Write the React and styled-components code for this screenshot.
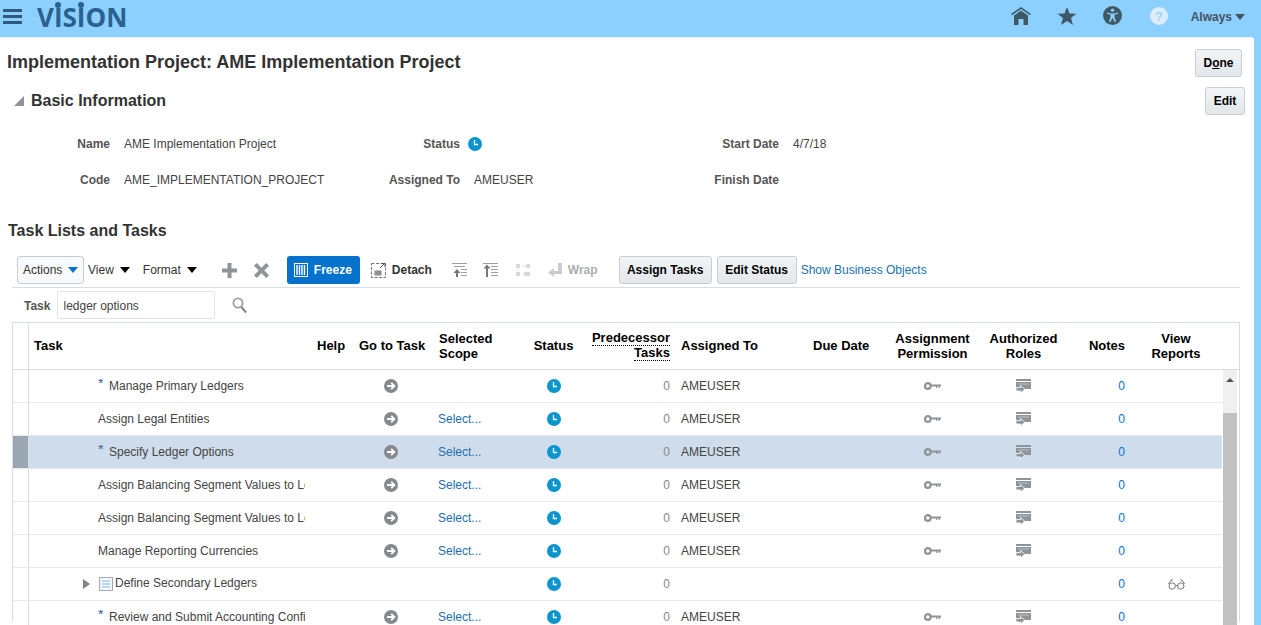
import React from 'react'
import styled, { createGlobalStyle } from 'styled-components'

const COLUMNS = '281px 41px 81px 91px 61px 91px 132px 80px 91px 91px 61px 92px'

const rows = [
  { name: 'Manage Primary Ledgers', required: true, scope: false },
  { name: 'Assign Legal Entities', scope: true },
  { name: 'Specify Ledger Options', required: true, scope: true, selected: true },
  { name: 'Assign Balancing Segment Values to Ledgers', scope: true },
  { name: 'Assign Balancing Segment Values to Ledgers', scope: true },
  { name: 'Manage Reporting Currencies', scope: true },
  { name: 'Define Secondary Ledgers', folder: true },
  { name: 'Review and Submit Accounting Configuration', required: true, scope: true },
]

const GlobalStyle = createGlobalStyle`
  html, body {
    margin: 0;
    padding: 0;
    height: 625px;
    overflow: hidden;
    background: #8cd0ff;
    font-family: "Liberation Sans", Arial, sans-serif;
    font-size: 12px;
    color: #333;
  }
`

const Page = styled.div`
  width: 1261px;
  height: 625px;
  overflow: hidden;
  background: #8cd0ff;
`

const Header = styled.header`
  height: 37px;
  display: flex;
  align-items: center;
  padding: 0 16px 0 3px;
  box-sizing: border-box;
`

const MenuIcon = styled.div`
  width: 19px;
  height: 15px;
  border-top: 3px solid #2f5a7c;
  border-bottom: 3px solid #2f5a7c;
  box-sizing: border-box;
  position: relative;
  top: -2px;
  &::after {
    content: '';
    display: block;
    height: 3px;
    margin-top: 3px;
    background: #2f5a7c;
  }
`

const Logo = styled.div`
  margin-left: 15px;
  font-family: "Open Sans", sans-serif;
  font-weight: 700;
  font-size: 26px;
  line-height: 27px;
  color: #2a6190;
  position: relative;
  top: -1px;
  white-space: nowrap;
`

const LogoDot = styled.span`
  position: relative;
  &::before {
    content: '';
    position: absolute;
    left: 50%;
    top: 3px;
    width: 6px;
    height: 6px;
    margin-left: -3px;
    border-radius: 50%;
    background: #2a6190;
  }
`

const HeaderRight = styled.div`
  margin-left: auto;
  display: flex;
  align-items: center;
  color: #3f5866;
  position: relative;
  top: -2px;
`

const HeaderIcon = styled.span`
  display: flex;
  width: 46px;
  justify-content: center;
  margin-top: -2px;
`

const UserName = styled.span`
  font-size: 12px;
  font-weight: 700;
  color: #44535f;
  display: flex;
  align-items: center;
  gap: 3px;
  margin-left: 9px;
`

const Caret = styled.span`
  width: 0;
  height: 0;
  border-left: 5px solid transparent;
  border-right: 5px solid transparent;
  border-top: 6px solid ${(p) => p.$color || '#000'};
`

const Panel = styled.main`
  width: 1254px;
  height: 588px;
  background: #fff;
  border-top: 1px solid #e8f5ff;
  border-top-right-radius: 3px;
  box-sizing: border-box;
  overflow: hidden;
`

const TitleRow = styled.div`
  display: flex;
  align-items: center;
  justify-content: space-between;
  padding: 11px 12px 0 7px;
`

const Title = styled.h1`
  margin: 0 0 2px;
  font-size: 18px;
  font-weight: 700;
  color: #333;
`

const Button = styled.button`
  height: 28px;
  padding: 0;
  background: linear-gradient(#f2f4f6, #e3e7ea);
  border: 1px solid #c4ced7;
  border-radius: 3px;
  font-family: inherit;
  font-size: 12px;
  font-weight: 700;
  color: #000;
  box-sizing: border-box;
  width: ${(p) => p.$w}px;
  flex: none;
`

const EditButton = styled(Button)`
  margin-left: auto;
`

const BasicRow = styled.div`
  display: flex;
  align-items: center;
  padding: 10px 9px 0 14px;
`

const SectionTitle = styled.h2`
  margin: 0;
  font-size: 16px;
  font-weight: 700;
  color: #333;
`

const Disclosure = styled.span`
  width: 0;
  height: 0;
  margin-right: 7px;
  border-left: 10px solid transparent;
  border-bottom: 10px solid #8f9498;
`

const Details = styled.div`
  display: grid;
  grid-template-columns: 110px 202px 120px 176px 115px 200px;
  column-gap: 14px;
  grid-auto-rows: 36px;
  align-items: center;
  margin-top: 11px;
`

const DetailLabel = styled.span`
  font-weight: 700;
  color: #555;
  text-align: right;
`

const DetailValue = styled.span`
  color: #444;
  display: flex;
  align-items: center;
`

const StatusValue = styled(DetailValue)`
  margin-left: -6px;
`

const TasksHeading = styled(SectionTitle)`
  margin: 23px 0 0 8px;
  line-height: 20px;
`

const Toolbar = styled.div`
  display: flex;
  align-items: center;
  height: 28px;
  margin: 15px 14px 0 12px;
  padding: 0 0 3px 5px;
  border-bottom: 1px solid #d6dfe6;
  box-sizing: content-box;
`

const ActionsBox = styled.div`
  width: 67px;
  height: 28px;
  box-sizing: border-box;
  border: 1px solid #c4ced7;
  border-radius: 3px;
  background: #f7f9fa;
  display: flex;
  align-items: center;
  gap: 6px;
  padding-left: 5px;
  color: #333;
`

const MenuItem = styled.span`
  display: flex;
  align-items: center;
  gap: 6px;
  margin-left: ${(p) => p.$ml}px;
  color: #333;
`

const ToolIcon = styled.span`
  display: flex;
  margin-left: ${(p) => p.$ml}px;
`

const FreezeButton = styled.div`
  width: 73px;
  height: 28px;
  margin-left: 18px;
  border-radius: 3px;
  background: #0572ce;
  color: #fff;
  font-weight: 700;
  display: flex;
  align-items: center;
  gap: 6px;
  padding-left: 7px;
  box-sizing: border-box;
`

const ToolText = styled.span`
  font-weight: 700;
  margin-left: ${(p) => p.$ml}px;
  color: ${(p) => (p.$disabled ? '#a9b0b5' : '#333')};
`

const ToolButton = styled(Button)`
  margin-left: ${(p) => p.$ml}px;
`

const ToolLink = styled.a`
  margin-left: 4px;
  color: #2073ae;
`

const FilterRow = styled.div`
  display: flex;
  align-items: center;
  height: 34px;
  padding: 0 0 0 24px;
  box-sizing: border-box;
`

const FilterLabel = styled.label`
  font-weight: 700;
  color: #555;
  padding-top: 2px;
`

const FilterInput = styled.div`
  width: 158px;
  height: 28px;
  margin-left: 7px;
  padding: 2px 0 0 5px;
  box-sizing: border-box;
  border: 1px solid #dfe4e8;
  border-radius: 2px;
  display: flex;
  align-items: center;
  color: #444;
`

const SearchWrap = styled.span`
  display: flex;
  margin-left: 17px;
`

const Table = styled.section`
  width: 1228px;
  height: 300px;
  margin-left: 12px;
  box-sizing: border-box;
  border: 1px solid #d6dfe6;
  border-bottom: 0;
  display: grid;
  grid-template-columns: 16px 1fr;
  grid-template-rows: 47px 1fr;
`

const Corner = styled.div`
  border-right: 1px solid #d6dfe6;
  border-bottom: 1px solid #d6dfe6;
`

const HeadRow = styled.div`
  display: grid;
  grid-template-columns: ${COLUMNS} 1fr;
  border-bottom: 1px solid #d6dfe6;
  font-weight: 700;
  font-size: 13px;
  color: #000;
`

const HeadCell = styled.div`
  display: flex;
  flex-direction: column;
  justify-content: center;
  line-height: 15px;
  margin-bottom: ${(p) => (p.$single ? 2 : 0)}px;
  padding: ${(p) => p.$pad || '0'};
  text-align: ${(p) => p.$align || 'left'};
  white-space: nowrap;
`

const Dotted = styled.span`
  align-self: flex-end;
  border-bottom: 1px dotted #000;
  line-height: 14px;
`

const Gutter = styled.div`
  display: flex;
  flex-direction: column;
  border-right: 1px solid #d6dfe6;
`

const GutterCell = styled.div`
  height: 33px;
  flex: none;
  box-sizing: border-box;
  background: ${(p) => (p.$selected ? '#9aa7b3' : 'transparent')};
  border-bottom: 1px solid #e8ecef;
`

const Body = styled.div`
  display: flex;
  overflow: hidden;
`

const RowList = styled.div`
  width: 1193px;
  flex: none;
`

const Row = styled.div`
  display: grid;
  grid-template-columns: ${COLUMNS};
  height: 33px;
  box-sizing: border-box;
  border-bottom: 1px solid #e8e8e8;
  background: ${(p) => (p.$selected ? '#cfdcec' : '#fff')};
  align-items: center;
  color: #444;
`

const Cell = styled.div`
  display: flex;
  align-items: center;
  justify-content: ${(p) => p.$justify || 'flex-start'};
  padding: ${(p) => p.$pad || '0'};
`

const TaskCell = styled.div`
  display: flex;
  align-items: center;
  margin-right: 5px;
  padding-left: ${(p) => (p.$folder ? 54 : 69)}px;
  overflow: hidden;
  white-space: nowrap;
`

const FolderName = styled.span`
  margin-bottom: 2px;
`

const Required = styled.span`
  color: #2f5f8f;
  font-size: 14px;
  line-height: 12px;
  width: 11px;
  flex: none;
  position: relative;
  top: -3px;
`

const Expander = styled.span`
  width: 0;
  height: 0;
  flex: none;
  margin-right: 9px;
  border-top: 5px solid transparent;
  border-bottom: 5px solid transparent;
  border-left: 7px solid #7f8589;
`

const LinkText = styled.a`
  color: #1c70ad;
`

const Number = styled.span`
  color: ${(p) => p.$color};
`

const Scrollbar = styled.div`
  width: 14px;
  margin-left: 1px;
  flex: none;
  background: #f0f0f0;
  display: flex;
  flex-direction: column;
`

const ScrollUp = styled.div`
  height: 43px;
  flex: none;
  display: flex;
  justify-content: center;
  padding-top: 8px;
  box-sizing: border-box;
  &::before {
    content: '';
    width: 0;
    height: 0;
    border-left: 4px solid transparent;
    border-right: 4px solid transparent;
    border-bottom: 4px solid #505050;
  }
`

const ScrollThumb = styled.div`
  flex: 1;
  background: #c1c1c1;
`

const Home = () => (
  <svg width="20" height="18" viewBox="0 0 20 18">
    <path d="M10 0 L20 7 L19 8.2 L10 2 L1 8.2 L0 7 Z" fill="currentColor" />
    <path d="M3 8.5 L10 3.6 L17 8.5 V18 H12.5 V12 H7.5 V18 H3 Z" fill="currentColor" />
  </svg>
)

const Star = () => (
  <svg width="20" height="18" viewBox="0 0 20 18">
    <path d="M10 0 L12.5 6.5 L19.5 6.8 L14 11 L16 18 L10 14 L4 18 L6 11 L.5 6.8 L7.5 6.5 Z" fill="currentColor" />
  </svg>
)

const Accessibility = () => (
  <svg width="19" height="19" viewBox="0 0 19 19">
    <circle cx="9.5" cy="9.5" r="9.5" fill="currentColor" />
    <circle cx="9.5" cy="4.2" r="1.6" fill="#8cd0ff" />
    <path d="M4 6.5 L8 7.4 H11 L15 6.5 L15.3 7.6 L11.5 8.8 V11 L13 15.8 L11.8 16.2 L9.5 11.8 L7.2 16.2 L6 15.8 L7.5 11 V8.8 L3.7 7.6 Z" fill="#8cd0ff" />
  </svg>
)

const Help = () => (
  <svg width="18" height="18" viewBox="0 0 18 18">
    <circle cx="9" cy="9" r="9" fill="#dcecf8" />
    <text x="9" y="13.5" textAnchor="middle" fontFamily="Liberation Sans" fontWeight="700" fontSize="13" fill="#9fd4fa">?</text>
  </svg>
)

const Plus = () => (
  <svg width="15" height="15" viewBox="0 0 15 15">
    <path d="M5.5 0 H9.5 V5.5 H15 V9.5 H9.5 V15 H5.5 V9.5 H0 V5.5 H5.5 Z" fill="#8e9498" />
  </svg>
)

const Cross = () => (
  <svg width="15" height="15" viewBox="0 0 15 15">
    <path d="M2.8 0 L7.5 4.7 L12.2 0 L15 2.8 L10.3 7.5 L15 12.2 L12.2 15 L7.5 10.3 L2.8 15 L0 12.2 L4.7 7.5 L0 2.8 Z" fill="#8e9498" />
  </svg>
)

const FreezeIcon = () => (
  <svg width="14" height="14" viewBox="0 0 14 14">
    <rect x=".5" y=".5" width="13" height="13" fill="none" stroke="#fff" />
    <path d="M3 2 V12 M5.5 2 V12 M8 2 V12 M10.5 2 V12" stroke="#fff" strokeWidth="1.4" />
  </svg>
)

const DetachIcon = () => (
  <svg width="16" height="16" viewBox="0 0 16 16">
    <rect x=".5" y="1.5" width="14" height="14" fill="none" stroke="#777" strokeDasharray="3 1.5" />
    <path d="M9 6 L13 2 M10.5 1.5 H14 V5" fill="none" stroke="#555" />
    <path d="M4 9 H10 V13 H4 Z M4 11 H10 M6 9 V13 M8 9 V13" fill="none" stroke="#555" strokeWidth=".8" />
  </svg>
)

const OutdentIcon = () => (
  <svg width="15" height="14" viewBox="0 0 15 14">
    <path d="M0 .5 H15 M2 3.5 H13 M9 6.5 H15 M9 9.5 H15 M9 12.5 H15" stroke="#9a9fa3" fill="none" />
    <path d="M5 6 L8.5 10 H6 V14 H4 V10 H1.5 Z" fill="#777" />
  </svg>
)

const IndentIcon = () => (
  <svg width="15" height="14" viewBox="0 0 15 14">
    <path d="M0 .5 H15 M8 3.5 H15 M8 6.5 H15 M8 9.5 H15 M8 12.5 H15" stroke="#9a9fa3" fill="none" />
    <path d="M4 1.5 L7.5 5.5 H5 V14 H3 V5.5 H.5 Z" fill="#777" />
  </svg>
)

const LinkIcon = () => (
  <svg width="15" height="14" viewBox="0 0 15 14">
    <path d="M0 1 H4 V5 H0 Z M10 1 H14 V5 H10 Z M0 9 H4 V13 H0 Z M8 9 H14 V13 H8 Z" fill="#d6d9db" />
    <path d="M6 3 H9 M2 6 V8 M6 11 H7" stroke="#d6d9db" fill="none" />
  </svg>
)

const WrapIcon = () => (
  <svg width="14" height="14" viewBox="0 0 14 14">
    <path d="M10 0 H14 V11 H6 V14 L0 9.5 L6 5 V8 H10 Z" fill="#c9cdd0" />
  </svg>
)

const Search = () => (
  <svg width="16" height="17" viewBox="0 0 16 17">
    <circle cx="6" cy="6" r="4.6" fill="none" stroke="#9a9fa3" strokeWidth="1.8" />
    <path d="M9.5 10 L14 15.5" stroke="#7f8589" strokeWidth="2" />
  </svg>
)

const GoArrow = () => (
  <svg width="14" height="14" viewBox="0 0 14 14">
    <circle cx="7" cy="7" r="7" fill="#84898d" />
    <path d="M3 7 H10 M7.2 3.8 L10.4 7 L7.2 10.2" fill="none" stroke="#fff" strokeWidth="1.8" />
  </svg>
)

const Clock = () => (
  <svg width="14" height="14" viewBox="0 0 14 14">
    <circle cx="7" cy="7" r="7" fill="#0b95cf" />
    <path d="M6.5 3 V7.5 H10" fill="none" stroke="#fff" strokeWidth="1.3" />
  </svg>
)

const Key = () => (
  <svg width="17" height="8" viewBox="0 0 17 8">
    <circle cx="3.8" cy="4" r="2.8" fill="none" stroke="#8e9498" strokeWidth="2.2" />
    <path d="M6 2.4 H17 V4.6 H15.8 V6 H14.6 V4.6 H13.2 V6 H12 V4.6 H6 Z" fill="#8e9498" />
  </svg>
)

const Roles = () => (
  <svg width="15" height="14" viewBox="0 0 15 14">
    <path d="M0 0 H15 V2 H0 Z M0 3 H15 V10 H0 Z" fill="#8e9498" />
    <path d="M2 5 H13" stroke="#c9cdd0" strokeWidth=".8" />
    <path d="M0 8.5 H4.5 V6.6 L8.8 10.3 L4.5 14 V12 H0 Z" fill="#8e9498" stroke="#fff" strokeWidth=".8" />
  </svg>
)

const Doc = () => (
  <svg width="14" height="14" viewBox="0 0 14 14" style={{ flex: 'none', marginRight: 2 }}>
    <rect x=".5" y=".5" width="13" height="13" fill="#f4f6f8" stroke="#a4a8ab" />
    <path d="M3 4 H11 M3 7 H11 M3 10 H11" stroke="#7fb6e6" />
  </svg>
)

const Glasses = () => (
  <svg width="17" height="11" viewBox="0 0 17 11">
    <circle cx="4.2" cy="7" r="3.2" fill="none" stroke="#777" />
    <circle cx="12.8" cy="7" r="3.2" fill="none" stroke="#777" />
    <path d="M7.4 6.5 H9.6 M.5 5 L3 1 H5 M16.5 5 L14 1 H12" fill="none" stroke="#777" />
  </svg>
)

const App = () => {
  return (
    <Page>
      <GlobalStyle />
      <Header>
        <MenuIcon />
        <Logo>V<LogoDot>I</LogoDot>S<LogoDot>I</LogoDot>ON</Logo>
        <HeaderRight>
          <HeaderIcon><Home /></HeaderIcon>
          <HeaderIcon><Star /></HeaderIcon>
          <HeaderIcon><Accessibility /></HeaderIcon>
          <HeaderIcon><Help /></HeaderIcon>
          <UserName>Always <Caret $color="#44535f" /></UserName>
        </HeaderRight>
      </Header>
      <Panel>
        <TitleRow>
          <Title>Implementation Project: AME Implementation Project</Title>
          <Button $w={47}>D<u>o</u>ne</Button>
        </TitleRow>
        <BasicRow>
          <Disclosure />
          <SectionTitle>Basic Information</SectionTitle>
          <EditButton $w={40}>Edit</EditButton>
        </BasicRow>
        <Details>
          <DetailLabel>Name</DetailLabel>
          <DetailValue>AME Implementation Project</DetailValue>
          <DetailLabel>Status</DetailLabel>
          <StatusValue><Clock /></StatusValue>
          <DetailLabel>Start Date</DetailLabel>
          <DetailValue>4/7/18</DetailValue>
          <DetailLabel>Code</DetailLabel>
          <DetailValue>AME_IMPLEMENTATION_PROJECT</DetailValue>
          <DetailLabel>Assigned To</DetailLabel>
          <DetailValue>AMEUSER</DetailValue>
          <DetailLabel>Finish Date</DetailLabel>
          <DetailValue />
        </Details>
        <TasksHeading>Task Lists and Tasks</TasksHeading>
        <Toolbar>
          <ActionsBox>Actions <Caret $color="#0572ce" /></ActionsBox>
          <MenuItem $ml={4}>View <Caret /></MenuItem>
          <MenuItem $ml={13}>Format <Caret /></MenuItem>
          <ToolIcon $ml={25}><Plus /></ToolIcon>
          <ToolIcon $ml={17}><Cross /></ToolIcon>
          <FreezeButton><FreezeIcon /> Freeze</FreezeButton>
          <ToolIcon $ml={11}><DetachIcon /></ToolIcon>
          <ToolText $ml={5}>Detach</ToolText>
          <ToolIcon $ml={20}><OutdentIcon /></ToolIcon>
          <ToolIcon $ml={16}><IndentIcon /></ToolIcon>
          <ToolIcon $ml={18}><LinkIcon /></ToolIcon>
          <ToolIcon $ml={17}><WrapIcon /></ToolIcon>
          <ToolText $ml={6} $disabled>Wrap</ToolText>
          <ToolButton $w={93} $ml={21}>Assign Tasks</ToolButton>
          <ToolButton $w={80} $ml={5}>Edit Status</ToolButton>
          <ToolLink>Show Business Objects</ToolLink>
        </Toolbar>
        <FilterRow>
          <FilterLabel>Task</FilterLabel>
          <FilterInput>ledger options</FilterInput>
          <SearchWrap><Search /></SearchWrap>
        </FilterRow>
        <Table>
          <Corner />
          <HeadRow>
            <HeadCell $single $pad="0 0 0 5px">Task</HeadCell>
            <HeadCell $single $pad="0 0 0 7px">Help</HeadCell>
            <HeadCell $single $pad="0 0 0 8px">Go to Task</HeadCell>
            <HeadCell $pad="0 0 0 7px"><span>Selected</span><span>Scope</span></HeadCell>
            <HeadCell $single $align="center">Status</HeadCell>
            <HeadCell $align="right" $pad="0 5px 0 0"><Dotted>Predecessor</Dotted><Dotted>Tasks</Dotted></HeadCell>
            <HeadCell $single $pad="0 0 0 6px">Assigned To</HeadCell>
            <HeadCell $single $pad="0 0 0 6px">Due Date</HeadCell>
            <HeadCell $align="center"><span>Assignment</span><span>Permission</span></HeadCell>
            <HeadCell $align="center"><span>Authorized</span><span>Roles</span></HeadCell>
            <HeadCell $single $align="right" $pad="0 5px 0 0">Notes</HeadCell>
            <HeadCell $align="center"><span>View</span><span>Reports</span></HeadCell>
          </HeadRow>
          <Gutter>
            {rows.map((row, i) => (
              <GutterCell key={i} $selected={row.selected} />
            ))}
          </Gutter>
          <Body>
            <RowList>
              {rows.map((row, i) => (
                <Row key={i} $selected={row.selected}>
                  <TaskCell $folder={row.folder}>
                    {row.required && <Required>*</Required>}
                    {row.folder && <Expander />}
                    {row.folder && <Doc />}
                    {row.folder ? <FolderName>{row.name}</FolderName> : row.name}
                  </TaskCell>
                  <Cell />
                  <Cell $justify="center" $pad="0 1px 0 0">{!row.folder && <GoArrow />}</Cell>
                  <Cell $pad="0 0 0 6px">{row.scope && <LinkText>Select...</LinkText>}</Cell>
                  <Cell $justify="center"><Clock /></Cell>
                  <Cell $justify="flex-end" $pad="0 5px 0 0"><Number $color="#888">0</Number></Cell>
                  <Cell $pad="0 0 0 6px">{!row.folder && 'AMEUSER'}</Cell>
                  <Cell />
                  <Cell $justify="center">{!row.folder && <Key />}</Cell>
                  <Cell $justify="center">{!row.folder && <Roles />}</Cell>
                  <Cell $justify="flex-end" $pad="0 5px 0 0"><Number $color="#0572ce">0</Number></Cell>
                  <Cell $justify="center">{row.folder && <Glasses />}</Cell>
                </Row>
              ))}
            </RowList>
            <Scrollbar>
              <ScrollUp />
              <ScrollThumb />
            </Scrollbar>
          </Body>
        </Table>
      </Panel>
    </Page>
  )
}

export default App
